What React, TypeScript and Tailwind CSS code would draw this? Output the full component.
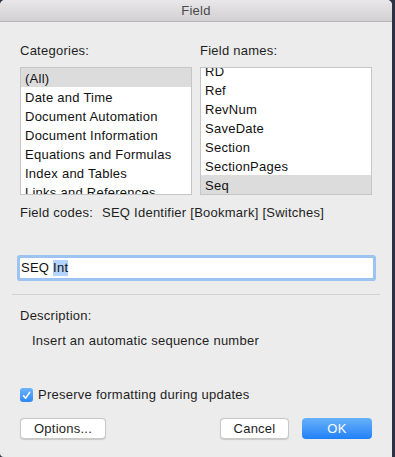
import React from 'react'

const categories = [
  '(All)',
  'Date and Time',
  'Document Automation',
  'Document Information',
  'Equations and Formulas',
  'Index and Tables',
  'Links and References',
]

const fieldNames = ['RD', 'Ref', 'RevNum', 'SaveDate', 'Section', 'SectionPages', 'Seq']

function ListBox({
  items,
  selected,
  alignEnd = false,
}: {
  items: string[]
  selected: string
  alignEnd?: boolean
}) {
  return (
    <div
      className={`w-[173px] h-[128px] bg-white border border-[#c6c6c6] overflow-hidden flex flex-col ${
        alignEnd ? 'justify-end' : 'justify-start'
      }`}
    >
      {items.map((item) => (
        <div
          key={item}
          className={`h-[19px] shrink-0 pt-[2px] leading-[17px] pl-[4px] whitespace-nowrap text-[#111] ${
            item === selected ? 'bg-[#dcdcdc]' : ''
          }`}
        >
          {item}
        </div>
      ))}
    </div>
  )
}

export default function App() {
  return (
    <div
      className="w-[395px] h-[457px] bg-[#2c3144] flex overflow-hidden text-[13px] tracking-[0.25px] text-[#1e1e1e]"
      style={{ fontFamily: '"Liberation Sans", Arial, sans-serif' }}
    >
      <div className="w-[392px] h-full bg-[#ececec] rounded-t-[5px] rounded-bl-[4px] flex flex-col overflow-hidden">
        {/* Title bar */}
        <div className="h-[22px] shrink-0 bg-gradient-to-b from-[#e9e7e9] to-[#d2d0d2] border-b border-[#b9b7b9] flex items-center justify-center text-[#4a4a4a]">
          Field
        </div>

        <div className="px-5 pt-[21px] flex flex-col">
          {/* Lists */}
          <div className="flex gap-[8px] leading-[16px]">
            <div className="w-[173px]">Categories:</div>
            <div className="w-[173px]">Field names:</div>
          </div>
          <div className="flex gap-[8px] mt-[8px]">
            <ListBox items={categories} selected="(All)" />
            <ListBox items={fieldNames} selected="Seq" alignEnd />
          </div>

          {/* Field codes */}
          <div className="flex mt-[10px] leading-[16px]">
            <span className="w-[82px]">Field codes:</span>
            <span>SEQ Identifier [Bookmark] [Switches]</span>
          </div>

          {/* Input */}
          <div className="mt-[37px] w-[353px] h-[20px] bg-white ring-[3px] ring-[#9dc3f1] rounded-[1px] flex items-center pl-[1px] leading-[16px] text-[#111]">
            <span>SEQ&nbsp;</span>
            <span className="bg-[#b3d4fc]">Int</span>
          </div>
        </div>

        {/* Separator */}
        <div className="mx-[12px] mt-[16px] h-px bg-[#d2d2d2]" />

        <div className="px-5 flex flex-col">
          <div className="mt-[13px] leading-[16px]">Description:</div>
          <div className="mt-[9px] pl-[12px] leading-[16px]">Insert an automatic sequence number</div>

          {/* Checkbox */}
          <div className="mt-[38px] flex items-center gap-[5px] leading-[16px]">
            <span className="w-[13px] h-[14px] rounded-[3px] bg-gradient-to-b from-[#6cb3fa] to-[#2a88f6] flex items-center justify-center">
              <svg width="9" height="9" viewBox="0 0 9 9" fill="none">
                <path d="M1.5 4.8 L3.6 7.2 L7.6 1.4" stroke="white" strokeWidth="1.6" strokeLinecap="round" strokeLinejoin="round" />
              </svg>
            </span>
            <span>Preserve formatting during updates</span>
          </div>

          {/* Buttons */}
          <div className="mt-[15px] flex items-center">
            <button className="w-[86px] h-[21px] bg-white border border-[#c8c8c8] rounded-[4px] shadow-[0_0.5px_1px_rgba(0,0,0,0.15)] text-[#1e1e1e] leading-[19px]">
              Options...
            </button>
            <div className="flex-1" />
            <button className="w-[69px] h-[21px] bg-white border border-[#c8c8c8] rounded-[4px] shadow-[0_0.5px_1px_rgba(0,0,0,0.15)] text-[#1e1e1e] leading-[19px]">
              Cancel
            </button>
            <button className="ml-[13px] w-[70px] h-[21px] rounded-[4px] bg-gradient-to-b from-[#68b1fa] to-[#1e80f6] text-white leading-[21px]">
              OK
            </button>
          </div>
        </div>
      </div>
    </div>
  )
}
